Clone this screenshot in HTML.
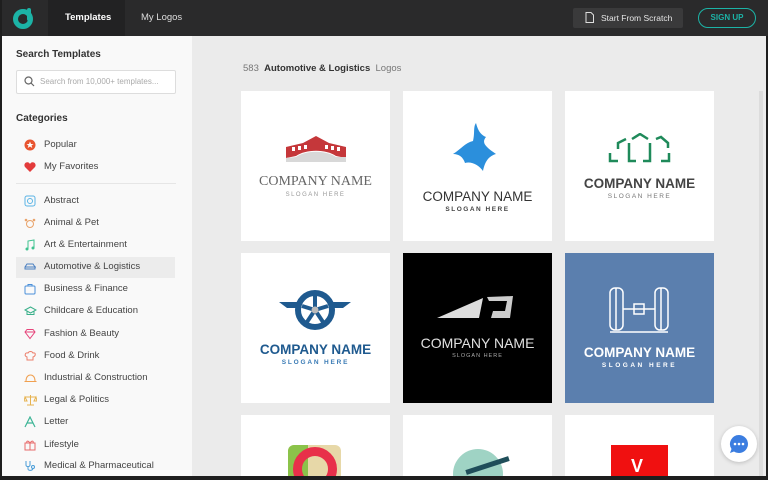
<!DOCTYPE html>
<html><head><meta charset="utf-8"><style>
*{margin:0;padding:0;box-sizing:border-box}
html,body{width:768px;height:480px;overflow:hidden}
body{background:#1e1e1e;font-family:"Liberation Sans",sans-serif;position:relative}
.abs{position:absolute}
#top{left:0;top:0;width:768px;height:36px;background:#2a2a2b}
#side{left:2px;top:36px;width:190px;height:440px;background:#f9f9f9}
#main{left:192px;top:36px;width:574px;height:440px;background:#ebebeb;overflow:hidden}
.cat{position:absolute;left:16px;width:158px;height:20px;font-size:9.5px;color:#444;line-height:20px;padding-left:26px}
.cat svg{position:absolute;left:6px;top:4px}
.card{position:absolute;width:149px;height:150px;background:#fff;overflow:hidden;text-align:center}
.cn{position:absolute;left:0;width:100%;text-align:center;white-space:nowrap}
</style></head><body>
<div id="top" class="abs">
  <svg class="abs" style="left:12px;top:7px" width="24" height="22" viewBox="0 0 24 22"><circle cx="11" cy="12" r="7.5" fill="none" stroke="#1cb3a6" stroke-width="5"/><path d="M17 12 V3" stroke="#1cb3a6" stroke-width="4" stroke-linecap="round"/></svg>
  <div class="abs" style="left:48px;top:0;width:77px;height:36px;background:#222223"></div>
  <div class="abs" style="left:65px;top:12px;font-size:9.5px;color:#fff;font-weight:bold">Templates</div>
  <div class="abs" style="left:141px;top:12px;font-size:9.5px;color:#ddd">My Logos</div>
  <div class="abs" style="left:573px;top:8px;width:110px;height:20px;background:#3a3a3b;border-radius:2px"></div>
  <svg class="abs" style="left:585px;top:12px" width="9" height="11" viewBox="0 0 9 11"><path d="M1 .5H6L8.5 3V10.5H1Z" fill="none" stroke="#ddd"/></svg>
  <div class="abs" style="left:601px;top:13px;font-size:8.5px;color:#e5e5e5">Start From Scratch</div>
  <div class="abs" style="left:698px;top:8px;width:58px;height:20px;border:1px solid #1cb3a6;border-radius:10px;color:#1cb3a6;font-size:8px;text-align:center;line-height:18px;font-weight:bold">SIGN UP</div>
</div>
<div id="side" class="abs">
  <div class="abs" style="left:14px;top:13px;font-size:10px;color:#333;font-weight:bold">Search Templates</div>
  <div class="abs" style="left:14px;top:34px;width:160px;height:24px;background:#fff;border:1px solid #ddd;border-radius:2px"></div>
  <svg class="abs" style="left:22px;top:40px" width="11" height="11"><circle cx="4.5" cy="4.5" r="3.5" fill="none" stroke="#666" stroke-width="1.2"/><path d="M7 7L10 10" stroke="#666" stroke-width="1.2"/></svg>
  <div class="abs" style="left:38px;top:41px;font-size:8px;color:#aaa">Search from 10,000+ templates...</div>
  <div class="abs" style="left:14px;top:77px;font-size:10px;color:#333;font-weight:bold">Categories</div>
</div>
<div class="abs" style="left:2px;top:36px;width:190px;height:440px;overflow:hidden">
  <div class="cat" style="top:99px"><svg width="12" height="12"><circle cx="6" cy="6" r="5.5" fill="#e8542f"/><path d="M6 2.5L7 5H9.5L7.5 6.5L8.3 9L6 7.5L3.7 9L4.5 6.5L2.5 5H5Z" fill="#fff"/></svg>Popular</div>
  <div class="cat" style="top:121px"><svg width="12" height="12"><path d="M6 11L1 6C-.5 4 1 1 3.5 1.2 4.8 1.3 5.5 2 6 3 6.5 2 7.2 1.3 8.5 1.2 11 1 12.5 4 11 6Z" fill="#e33b3b"/></svg>My Favorites</div>
  <div class="abs" style="left:14px;top:147px;width:160px;height:1px;background:#e6e6e6"></div>
  <div class="cat" style="top:155px"><svg width="12" height="12"><rect x="1" y="1" width="10" height="10" rx="2" fill="none" stroke="#5ab4e5"/><circle cx="6" cy="6" r="2.5" fill="none" stroke="#5ab4e5"/></svg>Abstract</div>
  <div class="cat" style="top:177px"><svg width="12" height="12"><circle cx="6" cy="7" r="3.5" fill="none" stroke="#e9a36a"/><circle cx="2" cy="3" r="1.3" fill="#e9a36a"/><circle cx="10" cy="3" r="1.3" fill="#e9a36a"/></svg>Animal &amp; Pet</div>
  <div class="cat" style="top:199px"><svg width="12" height="12"><path d="M4 10V2L10 1V9" fill="none" stroke="#3ec28f"/><circle cx="3" cy="10" r="1.5" fill="#3ec28f"/><circle cx="9" cy="9" r="1.5" fill="#3ec28f"/></svg>Art &amp; Entertainment</div>
  <div class="abs" style="left:14px;top:221px;width:159px;height:21px;background:#ececec"></div>
  <div class="cat" style="top:221px"><svg width="13" height="12"><path d="M1 8V6L3 3H9L11 6V8Z" fill="none" stroke="#4a7fc1"/><path d="M1 6H12" stroke="#4a7fc1"/></svg>Automotive &amp; Logistics</div>
  <div class="cat" style="top:243px"><svg width="12" height="12"><rect x="1" y="3" width="10" height="8" rx="1" fill="none" stroke="#4a90d9"/><path d="M4 3V1.5H8V3" fill="none" stroke="#4a90d9"/></svg>Business &amp; Finance</div>
  <div class="cat" style="top:265px"><svg width="13" height="12"><path d="M1 5L6.5 2L12 5L6.5 8Z M3 6.5V9.5H10V6.5" fill="none" stroke="#3ab08a"/></svg>Childcare &amp; Education</div>
  <div class="cat" style="top:288px"><svg width="12" height="12"><path d="M1 4L3 1.5H9L11 4L6 10.5Z" fill="none" stroke="#e6457b"/><path d="M1 4H11" stroke="#e6457b"/></svg>Fashion &amp; Beauty</div>
  <div class="cat" style="top:310px"><svg width="12" height="12"><path d="M3 10V7C0 6 1 2 4 3 5 1 8 1 9 3 12 2 12 6 9 7V10Z" fill="none" stroke="#ec7e6a"/></svg>Food &amp; Drink</div>
  <div class="cat" style="top:332px"><svg width="13" height="12"><path d="M2 9C2 5 4 3 6.5 3S11 5 11 9M0.5 9.5H12.5" fill="none" stroke="#f0a050"/></svg>Industrial &amp; Construction</div>
  <div class="cat" style="top:354px"><svg width="13" height="12"><path d="M6.5 1V11M3 11H10M1 3H12M1 3L0 7H3ZM12 3L10 7H13Z" fill="none" stroke="#e6b24f"/></svg>Legal &amp; Politics</div>
  <div class="cat" style="top:376px"><svg width="12" height="12"><path d="M1 11L6 1L11 11M3 7H9" fill="none" stroke="#3db596" stroke-width="1.2"/></svg>Letter</div>
  <div class="cat" style="top:399px"><svg width="12" height="12"><rect x="1" y="4" width="10" height="7" fill="none" stroke="#e86a6a"/><path d="M6 4V11M1 4H11M6 4C4 1 2 2 3 4M6 4C8 1 10 2 9 4" fill="none" stroke="#e86a6a"/></svg>Lifestyle</div>
  <div class="cat" style="top:420px"><svg width="12" height="12"><path d="M2 1V5C2 7 6 7 6 5V1M4 7V9C4 11 9 11 9 8" fill="none" stroke="#4a9dd8"/><circle cx="9" cy="7" r="1.5" fill="none" stroke="#4a9dd8"/></svg>Medical &amp; Pharmaceutical</div>
</div>
<div id="main" class="abs">
  <div class="abs" style="left:51px;top:27px;font-size:9.5px;color:#777;white-space:nowrap">583 &nbsp;<b style="color:#333">Automotive &amp; Logistics</b> &nbsp;Logos</div>
  <div class="card" style="left:49px;top:55px">
    <svg class="abs" style="left:40px;top:40px" width="70" height="35" viewBox="0 0 70 35"><path d="M5 27V16L22 12L35 5L48 12L65 16V27L55 25C45 18 25 18 15 25Z" fill="#c5373a"/><path d="M15 26C25 19 45 19 55 26H65V31H5V27Z" fill="#d8d8d8"/><g fill="#fff"><rect x="11" y="16" width="3" height="4"/><rect x="17" y="15" width="3" height="4"/><rect x="23" y="14" width="3" height="4"/><rect x="44" y="14" width="3" height="4"/><rect x="50" y="15" width="3" height="4"/><rect x="56" y="16" width="3" height="4"/></g></svg>
    <div class="cn" style="top:83px;font-family:'Liberation Serif',serif;font-size:14px;color:#666">COMPANY NAME</div>
    <div class="cn" style="top:101px;font-size:6px;color:#999;letter-spacing:1.5px">SLOGAN HERE</div>
  </div>
  <div class="card" style="left:211px;top:55px">
    <svg class="abs" style="left:48px;top:30px" width="50" height="55" viewBox="0 0 50 55"><path d="M25 2C27 10 30 14 35 16 30 22 35 26 45 33 38 35 34 40 32 50 28 44 20 40 14 42 12 36 8 33 2 33 10 28 14 22 22 20 24 12 22 6 25 2Z" fill="#2b8fdc"/></svg>
    <div class="cn" style="top:98px;font-size:13.5px;color:#333">COMPANY NAME</div>
    <div class="cn" style="top:115px;font-size:6.5px;color:#444;font-weight:bold;letter-spacing:1.5px">SLOGAN HERE</div>
  </div>
  <div class="card" style="left:373px;top:55px">
    <svg class="abs" style="left:43px;top:42px" width="63" height="32" viewBox="0 0 63 32" fill="none" stroke="#1f8a5a" stroke-width="2.5"><path d="M18 6L10 10V16M2 20V28H10M24 6L32 1L40 6M21 10V28H28M42 10V28H35M48 6L53 4L60 10V15M61 20V28H53"/></svg>
    <div class="cn" style="top:85px;font-size:13.5px;color:#444;font-weight:bold">COMPANY NAME</div>
    <div class="cn" style="top:102px;font-size:6.5px;color:#777;letter-spacing:1.5px">SLOGAN HERE</div>
  </div>
  <div class="card" style="left:49px;top:217px">
    <svg class="abs" style="left:36px;top:35px" width="76" height="45" viewBox="0 0 76 45"><path d="M2 14H20L22 20H10ZM74 14H56L54 20H66Z" fill="#1f5a8f"/><circle cx="38" cy="22" r="17" fill="none" stroke="#1f5a8f" stroke-width="6"/><g stroke="#1f5a8f" stroke-width="4"><path d="M38 22V8M38 22L51 18M38 22L46 34M38 22L30 34M38 22L25 18"/></g><circle cx="38" cy="22" r="3.5" fill="#bbb"/></svg>
    <div class="cn" style="top:89px;font-size:13.5px;color:#1f5a8f;font-weight:bold">COMPANY NAME</div>
    <div class="cn" style="top:106px;font-size:6.5px;color:#3a7bb5;font-weight:bold;letter-spacing:1.8px">SLOGAN HERE</div>
  </div>
  <div class="card" style="left:211px;top:217px;background:#000">
    <svg class="abs" style="left:32px;top:40px" width="80" height="35" viewBox="0 0 80 35"><path d="M2 25L48 5L44 25Z" fill="#ddd"/><path d="M52 4L78 3L75 25H56L58 18H70L72 8H54Z" fill="#ccc"/></svg>
    <div class="cn" style="top:82px;font-size:14px;color:#e0e0e0">COMPANY NAME</div>
    <div class="cn" style="top:100px;font-size:5.5px;color:#aaa;letter-spacing:1px">SLOGAN HERE</div>
  </div>
  <div class="card" style="left:373px;top:217px;background:#5b7fae">
    <svg class="abs" style="left:43px;top:33px" width="62" height="50" viewBox="0 0 62 50" fill="none" stroke="#fff" stroke-width="1.5"><rect x="2" y="2" width="13" height="42" rx="5"/><rect x="47" y="2" width="13" height="42" rx="5"/><path d="M15 23H47"/><rect x="26" y="18" width="10" height="10"/><path d="M2 46H60M8 2V44M53 2V44"/></svg>
    <div class="cn" style="top:92px;font-size:13.5px;color:#fff;font-weight:bold">COMPANY NAME</div>
    <div class="cn" style="top:109px;font-size:6.5px;color:#fff;font-weight:bold;letter-spacing:2.5px">SLOGAN HERE</div>
  </div>
  <div class="card" style="left:49px;top:379px;height:61px">
    <div class="abs" style="left:47px;top:30px;width:53px;height:40px;background:#e7d8a8;border-radius:6px"></div>
    <div class="abs" style="left:47px;top:30px;width:20px;height:40px;background:#8bc34a;border-radius:6px 0 0 6px"></div>
    <div class="abs" style="left:52px;top:32px;width:44px;height:44px;border:9px solid #e8304a;border-radius:50%"></div>
  </div>
  <div class="card" style="left:211px;top:379px;height:61px">
    <div class="abs" style="left:50px;top:34px;width:50px;height:50px;background:#9fd3c4;border-radius:50%"></div>
    <div class="abs" style="left:62px;top:48px;width:45px;height:5px;background:#1f4e5a;transform:rotate(-18deg)"></div>
  </div>
  <div class="card" style="left:373px;top:379px;height:61px">
    <div class="abs" style="left:46px;top:30px;width:57px;height:31px;background:#f01010"></div>
    <div class="abs" style="left:66px;top:41px;font-size:18px;font-weight:bold;color:#fff">V</div>
  </div>
  <div class="abs" style="left:567px;top:55px;width:4px;height:385px;background:#dcdcdc"></div>
  <div class="abs" style="left:529px;top:390px;width:36px;height:36px;border-radius:50%;background:#fff;box-shadow:0 1px 4px rgba(0,0,0,.2)"></div>
  <svg class="abs" style="left:537px;top:398px" width="20" height="20" viewBox="0 0 20 20"><path d="M10 1A9 9 0 1 1 5 17.5L1 19L2.5 15A9 9 0 0 1 10 1Z" fill="#3b7de0"/><circle cx="6" cy="10" r="1.3" fill="#fff"/><circle cx="10" cy="10" r="1.3" fill="#fff"/><circle cx="14" cy="10" r="1.3" fill="#fff"/></svg>
</div>
<div class="abs" style="left:0;top:0;width:2px;height:480px;background:#1e1e1e"></div>
<div class="abs" style="left:0;top:476px;width:768px;height:4px;background:#1e1e1e"></div>
</body></html>
